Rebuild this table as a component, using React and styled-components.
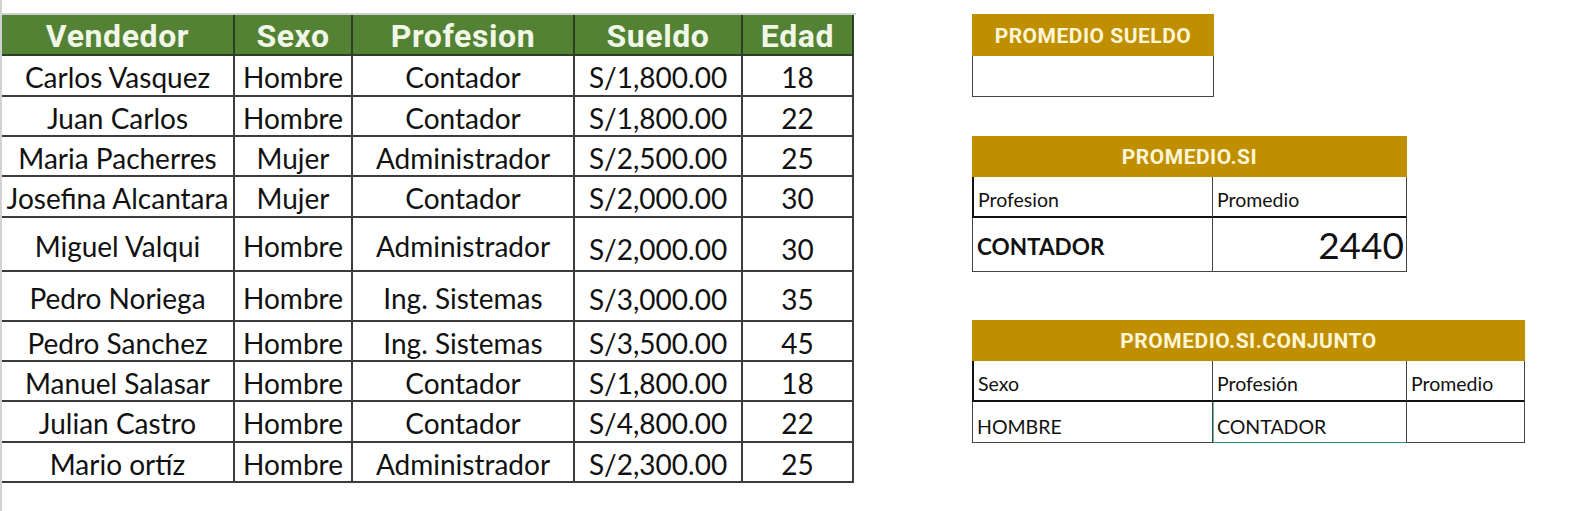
import React from 'react';
import styled, { createGlobalStyle } from 'styled-components';

const GlobalStyle = createGlobalStyle`
  html, body {
    margin: 0;
    padding: 0;
    background: #fff;
  }
  body {
    font-family: 'Lato', 'Liberation Sans', sans-serif;
    color: #111;
  }
`;

const Page = styled.div`
  align-items: flex-start;
  display: flex;
  height: 511px;
  overflow: hidden;
  width: 1586px;
`;

const Sheet = styled.div`
  border-left: 2px solid #d2d2d2;
  box-sizing: border-box;
  height: 511px;
  padding-top: 13px;
  width: 856px;
`;

const DataGrid = styled.div`
  border-top: 2px solid #cfcfcf;
  display: grid;
  grid-template-columns: 233px 118px 222px 168px 111px;
  grid-template-rows: ${props => props.rows.map(r => `${r}px`).join(' ')};
`;

const HeadCell = styled.div`
  align-items: center;
  background-color: #548235;
  border-bottom: 2px solid #2e3e25;
  border-right: 2px solid #2e3e25;
  box-sizing: border-box;
  color: #f1f7e6;
  display: flex;
  font-family: 'Roboto', 'Liberation Sans', sans-serif;
  font-size: 32px;
  font-weight: 700;
  justify-content: center;
  letter-spacing: 0.6px;
  padding-top: 2px;
`;

const Cell = styled.div`
  align-items: ${props => (props.low ? 'flex-end' : 'center')};
  border-bottom: 2px solid #3c3c3c;
  border-right: 2px solid #3c3c3c;
  box-sizing: border-box;
  display: flex;
  font-size: 28px;
  justify-content: center;
  padding-bottom: ${props => (props.low ? '4px' : '0')};
  padding-top: ${props => (props.low ? '0' : '3px')};
  white-space: nowrap;
`;

const Side = styled.div`
  display: flex;
  flex-direction: column;
  margin-left: 116px;
  padding-top: 14px;
`;

const Box = styled.div`
  display: grid;
  grid-template-columns: ${props => props.cols.map(c => `${c}px`).join(' ')};
  margin-top: ${props => props.top || 0}px;
`;

const BoxHead = styled.div`
  align-items: center;
  background-color: #bf8f00;
  box-sizing: border-box;
  color: #fff6d8;
  display: flex;
  font-family: 'Roboto', 'Liberation Sans', sans-serif;
  font-size: 21px;
  font-weight: 700;
  grid-column: 1 / -1;
  height: ${props => props.h}px;
  justify-content: center;
  letter-spacing: 0.5px;
  padding-top: 1px;
`;

const BoxCell = styled.div`
  align-items: flex-end;
  border-bottom: ${props => (props.strong ? '2px solid #111' : '1px solid #444')};
  border-left: ${props => (props.first ? (props.strong ? '2px solid #111' : '1px solid #444') : 'none')};
  border-right: 1px solid #444;
  box-sizing: border-box;
  display: flex;
  font-size: ${props => props.size || 19.5}px;
  font-weight: ${props => (props.bold ? 700 : 400)};
  height: ${props => props.h}px;
  justify-content: ${props => (props.right ? 'flex-end' : 'flex-start')};
  padding: 0 ${props => (props.right ? 2 : 6)}px ${props => props.pb || 5}px 4px;
  white-space: nowrap;
`;

const SelectedCell = styled(BoxCell)`
  border-bottom: 1px solid #2f8c73;
  box-shadow: inset 1px 0 0 #6fb6a3;
`;

const headers = ['Vendedor', 'Sexo', 'Profesion', 'Sueldo', 'Edad'];

const vendedores = [
  ['Carlos Vasquez', 'Hombre', 'Contador', 'S/1,800.00', '18'],
  ['Juan Carlos', 'Hombre', 'Contador', 'S/1,800.00', '22'],
  ['Maria Pacherres', 'Mujer', 'Administrador', 'S/2,500.00', '25'],
  ['Josefina Alcantara', 'Mujer', 'Contador', 'S/2,000.00', '30'],
  ['Miguel Valqui', 'Hombre', 'Administrador', 'S/2,000.00', '30'],
  ['Pedro Noriega', 'Hombre', 'Ing. Sistemas', 'S/3,000.00', '35'],
  ['Pedro Sanchez', 'Hombre', 'Ing. Sistemas', 'S/3,500.00', '45'],
  ['Manuel Salasar', 'Hombre', 'Contador', 'S/1,800.00', '18'],
  ['Julian Castro', 'Hombre', 'Contador', 'S/4,800.00', '22'],
  ['Mario ortíz', 'Hombre', 'Administrador', 'S/2,300.00', '25'],
];

const rowHeights = [41, 41, 40, 40, 41, 54, 50, 40, 40, 41, 40];

export default function App() {
  return (
    <>
      <GlobalStyle />
      <Page>
        <Sheet>
          <DataGrid rows={rowHeights}>
            {headers.map(h => (
              <HeadCell key={h}>{h}</HeadCell>
            ))}
            {vendedores.map((row, i) =>
              row.map((value, j) => (
                <Cell key={`${i}-${j}`} low={rowHeights[i + 1] > 44 && j > 2}>
                  {value}
                </Cell>
              ))
            )}
          </DataGrid>
        </Sheet>

        <Side>
          <Box cols={[242]}>
            <BoxHead h={42}>PROMEDIO SUELDO</BoxHead>
            <BoxCell first h={41} />
          </Box>

          <Box cols={[241, 194]} top={39}>
            <BoxHead h={41}>PROMEDIO.SI</BoxHead>
            <BoxCell first strong h={41}>Profesion</BoxCell>
            <BoxCell strong h={41}>Promedio</BoxCell>
            <BoxCell first h={54} size={22.5} bold pb={11}>CONTADOR</BoxCell>
            <BoxCell h={54} size={37} right pb={4}>2440</BoxCell>
          </Box>

          <Box cols={[241, 194, 118]} top={48}>
            <BoxHead h={41}>PROMEDIO.SI.CONJUNTO</BoxHead>
            <BoxCell first strong h={41}>Sexo</BoxCell>
            <BoxCell strong h={41}>Profesión</BoxCell>
            <BoxCell strong h={41}>Promedio</BoxCell>
            <BoxCell first h={41} pb={4}>HOMBRE</BoxCell>
            <SelectedCell h={41} pb={4}>CONTADOR</SelectedCell>
            <BoxCell h={41} />
          </Box>
        </Side>
      </Page>
    </>
  );
}
